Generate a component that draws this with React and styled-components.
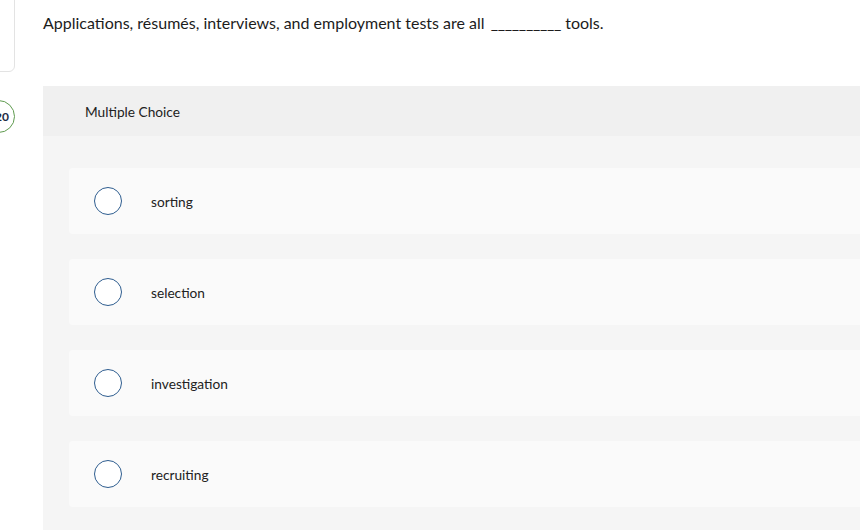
import React from 'react';
import styled, { createGlobalStyle } from 'styled-components';

const GlobalStyle = createGlobalStyle`
    html, body {
        margin: 0;
        padding: 0;
        background: #ffffff;
        overflow: hidden;
    }
    body {
        font-family: Lato, "Open Sans", Arial, sans-serif;
        color: #1c1c1c;
    }
`;

const Page = styled.div`
    position: relative;
    width: 860px;
    height: 530px;
    overflow: hidden;
    display: grid;
    grid-template-columns: 43px 1fr;
`;

const Gutter = styled.div`
    display: flex;
    flex-direction: column;
`;

const SideCard = styled.div`
    margin-left: -10px;
    margin-top: -10px;
    width: 23px;
    height: 80px;
    border: 1px solid #e3e3e3;
    border-radius: 0 0 6px 0;
    background: #fff;
`;

const Badge = styled.div`
    margin-top: 28px;
    margin-left: -18px;
    width: 31px;
    height: 31px;
    box-sizing: content-box;
    border: 1.5px solid #5e9a4e;
    border-radius: 50%;
    display: flex;
    align-items: center;
    justify-content: flex-end;
    font-size: 12px;
    font-weight: 700;
    color: #1c2a44;
    background: #fff;

    span {
        margin-right: 5px;
    }
`;

const Main = styled.div`
    display: flex;
    flex-direction: column;
`;

const Question = styled.p`
    margin: 0;
    padding-top: 13px;
    height: 86px;
    box-sizing: border-box;
    font-size: 16px;
    line-height: 20px;
    color: #1c1c1c;
`;

const Blank = styled.span`
    letter-spacing: -0.3px;
    margin-left: 2px;
`;

const Panel = styled.section`
    background: #f5f5f5;
    flex: 1;
    display: flex;
    flex-direction: column;
`;

const PanelHeader = styled.div`
    height: 50px;
    background: #f0f0f0;
    display: flex;
    align-items: center;
    padding-left: 42px;
    font-size: 13.7px;
    color: #222;
`;

const Options = styled.div`
    display: flex;
    flex-direction: column;
    gap: 25px;
    padding: 32px 0 0 26px;
`;

const Option = styled.label`
    height: 66px;
    background: #fafafa;
    border-radius: 4px 0 0 4px;
    display: flex;
    align-items: center;
    padding-left: 25px;
    cursor: pointer;
`;

const Radio = styled.span`
    width: 26px;
    height: 26px;
    border: 1.5px solid #2e5d8f;
    border-radius: 50%;
    background: #fff;
    flex-shrink: 0;
`;

const OptionText = styled.span`
    margin-left: 29px;
    font-size: 13.7px;
    color: #222;
`;

const choices = ['sorting', 'selection', 'investigation', 'recruiting'];

export default function App() {
    return (
        <>
            <GlobalStyle />
            <Page>
                <Gutter>
                    <SideCard />
                    <Badge><span>20</span></Badge>
                </Gutter>
                <Main>
                    <Question>
                        Applications, résumés, interviews, and employment tests are all <Blank>__________</Blank> tools.
                    </Question>
                    <Panel>
                        <PanelHeader>Multiple Choice</PanelHeader>
                        <Options>
                            {choices.map((c) => (
                                <Option key={c}>
                                    <Radio />
                                    <OptionText>{c}</OptionText>
                                </Option>
                            ))}
                        </Options>
                    </Panel>
                </Main>
            </Page>
        </>
    );
}
